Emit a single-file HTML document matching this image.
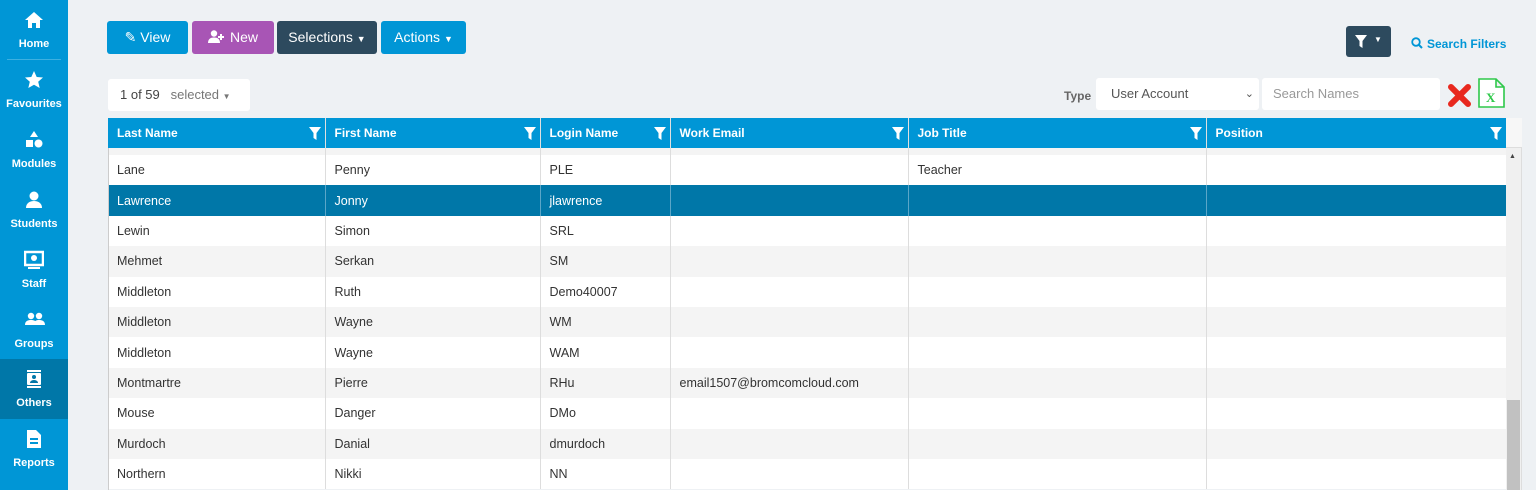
<!DOCTYPE html>
<html><head><meta charset="utf-8"><style>
*{box-sizing:border-box;margin:0;padding:0}
body{width:1536px;height:490px;overflow:hidden;background:#eef1f4;font-family:"Liberation Sans",sans-serif;position:relative}
.side{position:absolute;left:0;top:0;width:68px;height:490px;background:#0096d6}
.nav{position:absolute;left:0;width:68px;height:60px;color:#fff;font-size:11px;font-weight:bold;text-align:center}
.nav svg{position:absolute;left:24px;top:10px}
.nav span{position:absolute;left:0;right:0;top:38px}
.btn{position:absolute;top:21px;height:33px;border-radius:3px;color:#fff;font-size:14px;line-height:33px;text-align:center}
.abs{position:absolute}
table{position:absolute;left:108px;top:118px;width:1398px;border-collapse:collapse;table-layout:fixed}
th{background:#0096d6;color:#fff;font-size:12px;font-weight:bold;text-align:left;height:30px;padding-left:9px;border-right:1px solid #e0e0e0;position:relative}
th svg{position:absolute;right:4px;top:9px}
td{height:30.4px;font-size:12.5px;color:#333;padding-left:9px;border-right:1px solid #ddd;white-space:nowrap}
tr.g td{background:#f4f4f4}
tr.w td{background:#fff}
tr.s td{background:#0077a8;color:#fff;border-right-color:#5aa6c8}
</style></head><body>
<div class="side">
 <div class="nav" style="top:0"><svg width="20" height="20" viewBox="0 0 20 20"><path d="M10 2L1 10h3v8h4v-5h4v5h4v-8h3z" fill="#fff"/></svg><span>Home</span></div>
 <div class="abs" style="left:7px;top:59px;width:54px;height:1px;background:#3db0e0"></div>
 <div class="nav" style="top:60px"><svg width="20" height="20" viewBox="0 0 20 20"><path d="M10 1l2.7 6 6.3.5-4.8 4.2 1.5 6.3L10 14.7 4.3 18l1.5-6.3L1 7.5 7.3 7z" fill="#fff"/></svg><span>Favourites</span></div>
 <div class="nav" style="top:120px"><svg width="20" height="20" viewBox="0 0 20 20"><path d="M10 1l4 6H6z" fill="#fff"/><rect x="2" y="10" width="7" height="7" fill="#fff"/><circle cx="14.5" cy="13.5" r="4" fill="#fff"/></svg><span>Modules</span></div>
 <div class="nav" style="top:180px"><svg width="20" height="20" viewBox="0 0 20 20"><circle cx="10" cy="6" r="4.5" fill="#fff"/><path d="M2 18c0-5 4-7 8-7s8 2 8 7z" fill="#fff"/></svg><span>Students</span></div>
 <div class="nav" style="top:240px"><svg width="20" height="20" viewBox="0 0 20 20"><rect x="1" y="2" width="18" height="13" fill="none" stroke="#fff" stroke-width="2.5"/><circle cx="10" cy="8" r="3" fill="#fff"/><path d="M4 18h12" stroke="#fff" stroke-width="2"/></svg><span>Staff</span></div>
 <div class="nav" style="top:300px"><svg width="22" height="20" viewBox="0 0 22 20"><circle cx="7" cy="6" r="3.2" fill="#fff"/><circle cx="15" cy="6" r="3.2" fill="#fff"/><path d="M1 15c0-4 3-5 6-5s6 1 6 5zM10 15c0-4 2-5 5-5s6 1 6 5z" fill="#fff"/></svg><span>Groups</span></div>
 <div class="nav" style="top:359px;background:#0077a8"><svg width="20" height="20" viewBox="0 0 20 20"><rect x="3" y="1" width="14" height="2" fill="#fff"/><rect x="3" y="4" width="14" height="12" rx="1" fill="#fff"/><circle cx="10" cy="8" r="2" fill="#0077a8"/><path d="M6 14c0-2 2-3 4-3s4 1 4 3z" fill="#0077a8"/><rect x="3" y="17" width="14" height="2" fill="#fff"/></svg><span>Others</span></div>
 <div class="nav" style="top:419px"><svg width="20" height="20" viewBox="0 0 20 20"><path d="M3 1h9l5 5v13H3z" fill="#fff"/><path d="M6 10h8M6 14h8" stroke="#0096d6" stroke-width="2"/></svg><span>Reports</span></div>
</div>

<div class="btn" style="left:107px;width:81px;background:#0096d6">&#9998; View</div>
<div class="btn" style="left:192px;width:82px;background:#a855b5"><svg width="17" height="13" viewBox="0 0 17 13" style="vertical-align:-1px;margin-right:5px"><circle cx="6" cy="3.5" r="3.2" fill="#fff"/><path d="M0 13c0-4 2.5-5.5 6-5.5s6 1.5 6 5.5z" fill="#fff"/><path d="M13 4v6M10 7h6" stroke="#fff" stroke-width="2"/></svg>New</div>
<div class="btn" style="left:277px;width:100px;background:#2d4a5e">Selections <span style="font-size:9px">&#9660;</span></div>
<div class="btn" style="left:381px;width:85px;background:#0096d6">Actions <span style="font-size:9px">&#9660;</span></div>

<div class="abs" style="left:1346px;top:26px;width:45px;height:31px;background:#2d4a5e;border-radius:3px"><svg class="abs" style="left:9px;top:9px" width="12" height="13" viewBox="0 0 12 13"><path d="M0 0h12L7.5 6v7L4.5 11V6z" fill="#fff"/></svg><span class="abs" style="left:28px;top:9px;color:#fff;font-size:8px">&#9660;</span></div>
<div class="abs" style="left:1411px;top:37px;color:#0096d6;font-size:12px;font-weight:bold"><svg width="12" height="12" viewBox="0 0 12 12" style="vertical-align:-1px;margin-right:4px"><circle cx="5" cy="5" r="3.8" fill="none" stroke="#0096d6" stroke-width="1.8"/><path d="M8 8l3 3" stroke="#0096d6" stroke-width="2"/></svg>Search Filters</div>

<div class="abs" style="left:108px;top:79px;width:142px;height:32px;background:#fff;border-radius:3px;font-size:13px;line-height:32px;padding-left:12px;color:#444">1 of 59 &nbsp;&nbsp;<span style="color:#777">selected <span style="font-size:8px">&#9660;</span></span></div>

<div class="abs" style="left:1064px;top:89px;font-size:12px;font-weight:bold;color:#666">Type</div>
<div class="abs" style="left:1096px;top:78px;width:163px;height:32px;background:#fff;border-radius:3px;font-size:13px;line-height:32px;padding-left:15px;color:#555">User Account<span class="abs" style="right:5px;top:0;font-size:11px">&#8964;</span></div>
<div class="abs" style="left:1262px;top:78px;width:178px;height:32px;background:#fff;border-radius:3px;font-size:13px;line-height:32px;padding-left:11px;color:#999">Search Names</div>
<svg class="abs" style="left:1447px;top:83px" width="25" height="25" viewBox="0 0 25 25"><path d="M4 4l17 17M21 4L4 21" stroke="#e8281e" stroke-width="6" stroke-linecap="round"/></svg>
<svg class="abs" style="left:1478px;top:78px" width="27" height="30" viewBox="0 0 27 30"><path d="M1 1h17l8 8v20H1z M18 1v8h8" fill="#fff" stroke="#2ec84a" stroke-width="1.6"/><text x="8" y="24" font-family="Liberation Serif" font-weight="bold" font-size="13" fill="#2ec84a">X</text></svg>

<table>
<colgroup><col style="width:217px"><col style="width:215px"><col style="width:130px"><col style="width:238px"><col style="width:298px"><col style="width:300px"></colgroup>
<tr><th>Last Name<svg width="12" height="13" viewBox="0 0 12 13"><path d="M0 0h12L7.5 6v7L4.5 11V6z" fill="#fff"/></svg></th><th>First Name<svg width="12" height="13" viewBox="0 0 12 13"><path d="M0 0h12L7.5 6v7L4.5 11V6z" fill="#fff"/></svg></th><th>Login Name<svg width="12" height="13" viewBox="0 0 12 13"><path d="M0 0h12L7.5 6v7L4.5 11V6z" fill="#fff"/></svg></th><th>Work Email<svg width="12" height="13" viewBox="0 0 12 13"><path d="M0 0h12L7.5 6v7L4.5 11V6z" fill="#fff"/></svg></th><th>Job Title<svg width="12" height="13" viewBox="0 0 12 13"><path d="M0 0h12L7.5 6v7L4.5 11V6z" fill="#fff"/></svg></th><th>Position<svg width="12" height="13" viewBox="0 0 12 13"><path d="M0 0h12L7.5 6v7L4.5 11V6z" fill="#fff"/></svg></th></tr>
<tr class="g"><td style="height:7px"></td><td style="height:7px"></td><td style="height:7px"></td><td style="height:7px"></td><td style="height:7px"></td><td style="height:7px"></td></tr>
<tr class="w"><td>Lane</td><td>Penny</td><td>PLE</td><td></td><td>Teacher</td><td></td></tr>
<tr class="s"><td>Lawrence</td><td>Jonny</td><td>jlawrence</td><td></td><td></td><td></td></tr>
<tr class="w"><td>Lewin</td><td>Simon</td><td>SRL</td><td></td><td></td><td></td></tr>
<tr class="g"><td>Mehmet</td><td>Serkan</td><td>SM</td><td></td><td></td><td></td></tr>
<tr class="w"><td>Middleton</td><td>Ruth</td><td>Demo40007</td><td></td><td></td><td></td></tr>
<tr class="g"><td>Middleton</td><td>Wayne</td><td>WM</td><td></td><td></td><td></td></tr>
<tr class="w"><td>Middleton</td><td>Wayne</td><td>WAM</td><td></td><td></td><td></td></tr>
<tr class="g"><td>Montmartre</td><td>Pierre</td><td>RHu</td><td>email1507@bromcomcloud.com</td><td></td><td></td></tr>
<tr class="w"><td>Mouse</td><td>Danger</td><td>DMo</td><td></td><td></td><td></td></tr>
<tr class="g"><td>Murdoch</td><td>Danial</td><td>dmurdoch</td><td></td><td></td><td></td></tr>
<tr class="w"><td>Northern</td><td>Nikki</td><td>NN</td><td></td><td></td><td></td></tr>
</table>
<div class="abs" style="left:108px;top:148px;width:1px;height:342px;background:#ccc"></div>
<div class="abs" style="left:1506px;top:118px;width:16px;height:372px;background:#f0f0f0;border-right:1px solid #ddd"></div>
<div class="abs" style="left:1506px;top:118px;width:16px;height:30px;background:#f7f7f7;border-bottom:1px solid #ddd"></div>
<div class="abs" style="left:1509px;top:153px;font-size:7px;color:#444">&#9650;</div>
<div class="abs" style="left:1507px;top:400px;width:13px;height:90px;background:#c1c1c1"></div>
</body></html>
